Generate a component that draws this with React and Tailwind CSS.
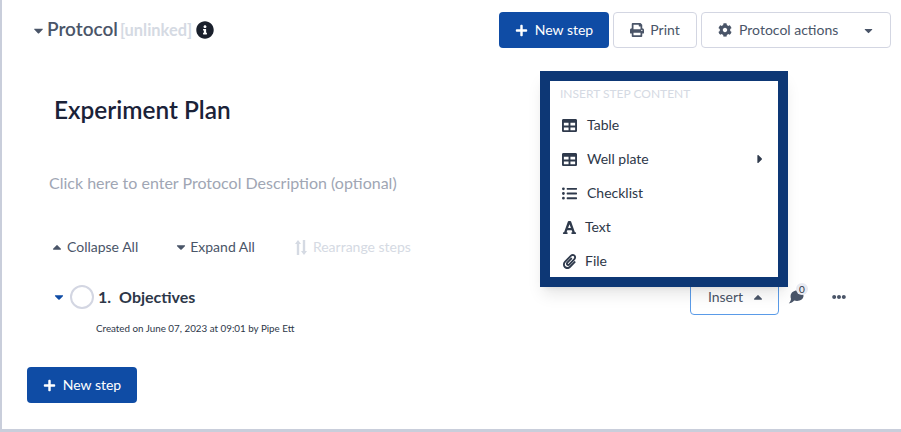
import {
  FaCaretDown,
  FaCaretRight,
  FaCaretUp,
  FaCog,
  FaEllipsisH,
  FaFont,
  FaInfoCircle,
  FaListUl,
  FaPaperclip,
  FaPlus,
  FaPrint,
  FaTable,
} from "react-icons/fa";

const menuItems = [
  { label: "Table", icon: FaTable, gap: "gap-[10px]" },
  { label: "Well plate", icon: FaTable, gap: "gap-[10px]", submenu: true },
  { label: "Checklist", icon: FaListUl, gap: "gap-[10px]" },
  { label: "Text", icon: FaFont, gap: "gap-2" },
  { label: "File", icon: FaPaperclip, gap: "gap-2" },
];

function NewStepButton() {
  return (
    <button className="flex h-9 w-[110px] items-center justify-center gap-[7px] rounded bg-[#0f4ca5] text-sm text-white">
      <FaPlus className="text-[13px]" />
      New step
    </button>
  );
}

function RearrangeIcon() {
  return (
    <svg width="12" height="15" viewBox="0 0 12 15" fill="#d5dae3">
      <path d="M3 0 L6 4 H4.2 V15 H1.8 V4 H0 Z" />
      <path d="M9 15 L6 11 H7.8 V0 H10.2 V11 H12 Z" />
    </svg>
  );
}

// speech bubble with its tail at the lower left
function CommentIcon() {
  return (
    <svg width="16" height="14" viewBox="0 0 16 14" fill="#4a5568">
      <path d="M9 0.5 C12.8 0.5 15.5 2.9 15.5 5.8 C15.5 8.8 12.8 11 9 11 C8 11 7 10.8 6.2 10.5 C5 12 3 13.3 0.8 13.4 C1.9 12.2 2.8 10.6 3 8.9 C2.6 7.9 2.5 6.9 2.6 5.8 C2.9 2.9 5.4 0.5 9 0.5 Z" />
    </svg>
  );
}

function InsertMenu() {
  return (
    <div className="absolute left-[538px] top-[71px] z-10 h-[216px] w-[248px] border-[10px] border-[#0d3775] bg-white shadow-lg">
      <div className="flex h-[27px] items-center pl-[10px] pb-[1px] text-xs text-[#d5dae3]">
        INSERT STEP CONTENT
      </div>
      {menuItems.map((item) => (
        <div
          key={item.label}
          className="flex h-[34px] items-center pl-3 pr-[11px] text-sm text-[#2d3748]"
        >
          <span className={`flex items-center ${item.gap}`}>
            <item.icon className="w-[15px] text-[15px] text-[#2f3a4c]" />
            {item.label}
          </span>
          {item.submenu && (
            <FaCaretRight className="ml-auto text-sm text-[#2f3a4c]" />
          )}
        </div>
      ))}
    </div>
  );
}

export default function App() {
  return (
    <div
      className="relative h-[432px] w-[901px] overflow-hidden border-b-[3px] border-l-2 border-[#c9cedb] bg-white text-[#2d3748]"
      style={{ fontFamily: '"Lato", sans-serif' }}
    >
      <div className="flex items-center justify-between pl-[29px] pr-[10px] pt-3">
        <div className="flex items-center">
          <FaCaretDown className="text-[15px] text-[#4a5568]" />
          <span className="ml-px pb-px text-[19px] font-semibold text-[#4a5568]">
            Protocol
          </span>
          <span className="ml-[2px] text-[16.4px] font-bold text-[#d5dae3]">
            [unlinked]
          </span>
          <FaInfoCircle className="ml-1 text-lg text-[#1a202c]" />
        </div>
        <div className="flex gap-1">
          <NewStepButton />
          <button className="flex h-9 w-[84px] items-center justify-center gap-[6px] rounded border border-[#d3d6e2] text-sm text-[#4a5568]">
            <FaPrint className="text-sm" />
            Print
          </button>
          <button className="flex h-9 w-[190px] items-center rounded border border-[#d3d6e2] pl-4 pr-[15px] text-sm text-[#4a5568]">
            <FaCog className="mr-[7px] text-sm" />
            Protocol actions
            <FaCaretDown className="ml-auto text-[13px]" />
          </button>
        </div>
      </div>

      <h1 className="ml-[52px] mt-[44px] text-[24.4px] font-semibold leading-[36px] text-[#1a2238]">
        Experiment Plan
      </h1>

      <p className="ml-[47px] mt-[43px] text-base leading-6 text-[#a0a6b4]">
        Click here to enter Protocol Description (optional)
      </p>

      <div className="ml-[48px] mt-[40px] flex h-6 items-center text-sm text-[#4a5568]">
        <FaCaretUp className="text-sm" />
        <span className="ml-[3px]">Collapse All</span>
        <FaCaretDown className="ml-[36px] text-sm" />
        <span className="ml-[2px]">Expand All</span>
        <span className="ml-10 flex items-center gap-[6px] text-[#d5dae3]">
          <RearrangeIcon />
          Rearrange steps
        </span>
      </div>

      <div className="mt-[23px] flex h-[30px] items-center pr-[55px]">
        <FaCaretDown className="ml-[50px] text-sm text-[#0f4ca5]" />
        <span className="ml-1 h-6 w-6 rounded-full border-2 border-[#d3d6e2]" />
        <span className="ml-1 text-base font-bold text-[#2d3748]">1.</span>
        <span className="ml-2 text-base font-bold text-[#2d3748]">
          Objectives
        </span>
        <button className="ml-auto flex h-9 w-[89px] shrink-0 items-center justify-center gap-2 rounded border border-[#5a9be8] pl-1 text-sm text-[#4a5568]">
          Insert
          <FaCaretUp className="text-sm" />
        </button>
        <span className="relative ml-[9px] h-[14px] w-4">
          <CommentIcon />
          <span className="absolute -top-[7px] left-[8px] flex h-3 w-3 items-center justify-center rounded-full bg-[#e8eaf2] text-[10px] leading-none">
            0
          </span>
        </span>
        <FaEllipsisH className="ml-[28px] text-sm text-[#4a5568]" />
      </div>

      <p className="ml-[94px] mt-[10px] text-[9.8px] leading-3 text-[#2d3748]">
        Created on June 07, 2023 at 09:01 by Pipe Ett
      </p>

      <div className="ml-[25px] mt-[33px]">
        <NewStepButton />
      </div>

      <InsertMenu />
    </div>
  );
}
